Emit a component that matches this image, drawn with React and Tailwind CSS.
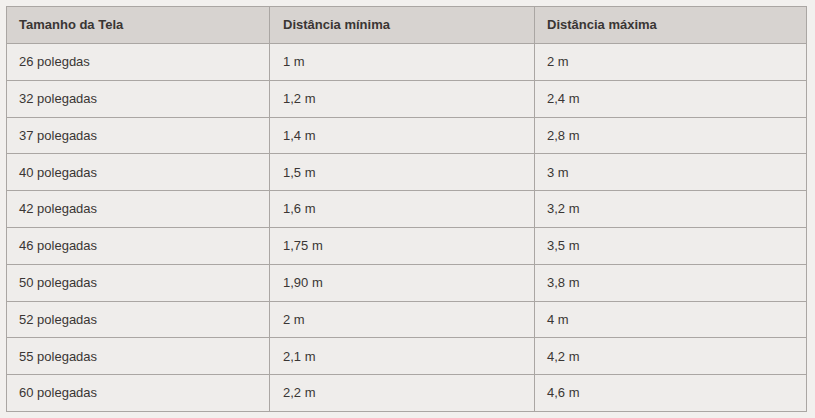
const ROWS = [
  ['26 polegdas', '1 m', '2 m'],
  ['32 polegadas', '1,2 m', '2,4 m'],
  ['37 polegadas', '1,4 m', '2,8 m'],
  ['40 polegadas', '1,5 m', '3 m'],
  ['42 polegadas', '1,6 m', '3,2 m'],
  ['46 polegadas', '1,75 m', '3,5 m'],
  ['50 polegadas', '1,90 m', '3,8 m'],
  ['52 polegadas', '2 m', '4 m'],
  ['55 polegadas', '2,1 m', '4,2 m'],
  ['60 polegadas', '2,2 m', '4,6 m'],
];

export default function App() {
  return (
    <div className="w-[815px] h-[418px] bg-[#f2f0ee] pt-[6px] pl-[6px] font-['Liberation_Sans',Arial,sans-serif] text-[13px] text-[#3a3634]">
      <table className="w-[800px] border-collapse table-fixed">
        <colgroup>
          <col className="w-[263px]" />
          <col className="w-[265px]" />
          <col className="w-[272px]" />
        </colgroup>
        <thead>
          <tr className="h-[37px] bg-[#d7d3d0]">
            <th className="border border-[#aaa6a3] text-left font-bold pl-[12px]">Tamanho da Tela</th>
            <th className="border border-[#aaa6a3] text-left font-bold pl-[13px]">Distância mínima</th>
            <th className="border border-[#aaa6a3] text-left font-bold pl-[12px]">Distância máxima</th>
          </tr>
        </thead>
        <tbody>
          {ROWS.map((row) => (
            <tr key={row[0]} className="h-[36.8px] bg-[#efedeb]">
              <td className="border border-[#aaa6a3] pl-[12px]">{row[0]}</td>
              <td className="border border-[#aaa6a3] pl-[13px]">{row[1]}</td>
              <td className="border border-[#aaa6a3] pl-[12px]">{row[2]}</td>
            </tr>
          ))}
        </tbody>
      </table>
    </div>
  );
}
